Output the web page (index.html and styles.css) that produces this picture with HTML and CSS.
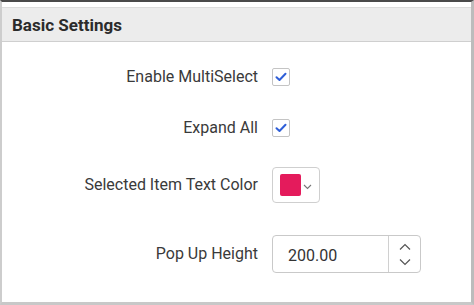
FILE: index.html
```html
<!DOCTYPE html>
<html>
<head>
<meta charset="utf-8">
<link rel="stylesheet" href="styles.css">
</head>
<body>
<div class="frame">
  <div class="header">Basic Settings</div>
  <div class="body">
    <div class="row r1">
      <div class="label">Enable MultiSelect</div>
      <div class="ctrl"><span class="check"><svg width="12" height="10" viewBox="0 0 12 10"><path d="M1.5 5.2 L4.5 8 L10.5 1.8" fill="none" stroke="#2f5fd8" stroke-width="2" stroke-linecap="round" stroke-linejoin="round"/></svg></span></div>
    </div>
    <div class="row r2">
      <div class="label">Expand All</div>
      <div class="ctrl"><span class="check"><svg width="12" height="10" viewBox="0 0 12 10"><path d="M1.5 5.2 L4.5 8 L10.5 1.8" fill="none" stroke="#2f5fd8" stroke-width="2" stroke-linecap="round" stroke-linejoin="round"/></svg></span></div>
    </div>
    <div class="row r3">
      <div class="label">Selected Item Text Color</div>
      <div class="ctrl">
        <div class="picker">
          <span class="swatch"></span>
          <svg class="chev" width="9" height="6" viewBox="0 0 9 6"><path d="M1 1 L4.5 4.5 L8 1" fill="none" stroke="#777" stroke-width="1.1"/></svg>
        </div>
      </div>
    </div>
    <div class="row r4">
      <div class="label">Pop Up Height</div>
      <div class="ctrl">
        <div class="numeric">
          <span class="value">200.00</span>
          <span class="spin">
            <svg width="12" height="8" viewBox="0 0 12 8"><path d="M1 6.5 L6 1.5 L11 6.5" fill="none" stroke="#555" stroke-width="1.2"/></svg>
            <svg width="12" height="8" viewBox="0 0 12 8"><path d="M1 1.5 L6 6.5 L11 1.5" fill="none" stroke="#555" stroke-width="1.2"/></svg>
          </span>
        </div>
      </div>
    </div>
  </div>
</div>
</body>
</html>
```
FILE: styles.css
```css
html, body {
  margin: 0;
  padding: 0;
  background: #ffffff;
}
.frame {
  width: 474px;
  height: 305px;
  box-sizing: border-box;
  border-top: 2px solid #4a4a4a;
  border-left: 2px solid #cdcdcd;
  border-right: 3px solid #bcbcbc;
  border-bottom: 3px solid #c8c8c8;
  padding-top: 5px;
  background: #ffffff;
  font-family: Roboto, "Liberation Sans", sans-serif;
  color: #333333;
}
.header {
  height: 33px;
  box-sizing: content-box;
  background: #ececec;
  border-top: 1px solid #dcdcdc;
  border-bottom: 1px solid #cfcfcf;
  padding-left: 10px;
  display: flex;
  align-items: center;
  font-weight: bold;
  font-size: 17px;
  color: #2b2b2b;
}
.body {
  padding-top: 17px;
  display: flex;
  flex-direction: column;
}
.row {
  display: grid;
  grid-template-columns: 256px auto;
  column-gap: 14px;
  align-items: center;
  height: 36px;
}
.r2 { margin-top: 15px; }
.r3 { margin-top: 21px; }
.r4 { margin-top: 32px; height: 38px; }
.label {
  text-align: right;
  font-size: 16px;
  color: #3a3a3a;
  padding-bottom: 2px;
}
.ctrl {
  display: flex;
  align-items: center;
}
.check {
  width: 16px;
  height: 16px;
  border: 1px solid #c4c4c4;
  border-radius: 2px;
  display: flex;
  align-items: center;
  justify-content: center;
  background: #ffffff;
}
.picker {
  width: 48px;
  height: 36px;
  box-sizing: border-box;
  border: 1px solid #cfcfcf;
  border-radius: 4px;
  display: flex;
  align-items: center;
  padding-left: 7px;
}
.swatch {
  width: 21px;
  height: 22px;
  background: #e41b5c;
  border-radius: 2px;
}
.chev {
  margin-left: 2px;
  margin-top: 3px;
}
.numeric {
  width: 149px;
  height: 38px;
  box-sizing: border-box;
  border: 1px solid #c9c9c9;
  border-radius: 4px;
  display: flex;
  align-items: stretch;
}
.value {
  width: 100px;
  padding-left: 15px;
  font-size: 16px;
  color: #333333;
  display: flex;
  align-items: center;
  border-right: 1px solid #d0d0d0;
  padding-top: 2px;
}
.spin {
  flex: 1;
  display: flex;
  flex-direction: column;
  align-items: center;
  justify-content: center;
  gap: 7px;
}
```
